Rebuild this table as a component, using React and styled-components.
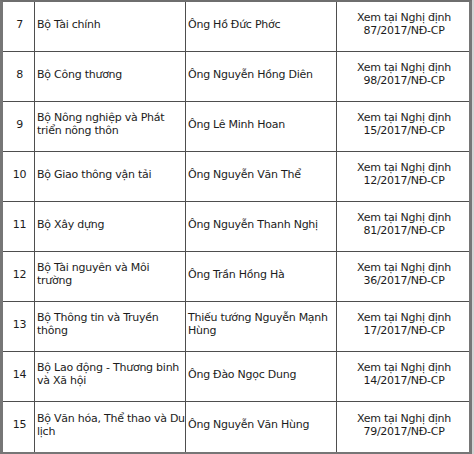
import React from 'react'
import styled, { createGlobalStyle } from 'styled-components'

const GlobalStyle = createGlobalStyle`
  html, body {
    margin: 0;
    padding: 0;
    background: #d4d4d4;
  }
`

const Table = styled.div`
  display: grid;
  grid-template-columns: 32px 151px 151px 132px;
  grid-auto-rows: 50px;
  width: 466px;
  background: #fff;
  border-top: 2px solid #6e6e6e;
  border-left: 3px solid #767676;
  border-right: 3px solid #767676;
  border-bottom: 3px solid #767676;
  font-family: "DejaVu Sans", Verdana, sans-serif;
  font-size: 11px;
  line-height: 13px;
  letter-spacing: -0.25px;
  color: #1c1c1c;
`

const Cell = styled.div`
  box-sizing: border-box;
  display: flex;
  flex-direction: column;
  justify-content: center;
  align-items: ${p => (p.center ? 'center' : 'flex-start')};
  text-align: ${p => (p.center ? 'center' : 'left')};
  padding: 0 0 5px 2px;
  white-space: nowrap;
  overflow: hidden;
  border-right: ${p => (p.lastCol ? 'none' : '1px solid #4e4e4e')};
  border-bottom: ${p => (p.lastRow ? 'none' : '1px solid #4e4e4e')};
`

const Line = styled.span`
  display: block;
`

const rows = [
  ['7', ['Bộ Tài chính'], ['Ông Hồ Đức Phớc'], '87/2017/NĐ-CP'],
  ['8', ['Bộ Công thương'], ['Ông Nguyễn Hồng Diên'], '98/2017/NĐ-CP'],
  ['9', ['Bộ Nông nghiệp và Phát', 'triển nông thôn'], ['Ông Lê Minh Hoan'], '15/2017/NĐ-CP'],
  ['10', ['Bộ Giao thông vận tải'], ['Ông Nguyễn Văn Thể'], '12/2017/NĐ-CP'],
  ['11', ['Bộ Xây dựng'], ['Ông Nguyễn Thanh Nghị'], '81/2017/NĐ-CP'],
  ['12', ['Bộ Tài nguyên và Môi', 'trường'], ['Ông Trần Hồng Hà'], '36/2017/NĐ-CP'],
  ['13', ['Bộ Thông tin và Truyền', 'thông'], ['Thiếu tướng Nguyễn Mạnh', 'Hùng'], '17/2017/NĐ-CP'],
  ['14', ['Bộ Lao động - Thương binh', 'và Xã hội'], ['Ông Đào Ngọc Dung'], '14/2017/NĐ-CP'],
  ['15', ['Bộ Văn hóa, Thể thao và Du', 'lịch'], ['Ông Nguyễn Văn Hùng'], '79/2017/NĐ-CP'],
]

const Lines = ({ items }) => items.map((t, i) => <Line key={i}>{t}</Line>)

const App = () => (
  <>
    <GlobalStyle />
    <Table>
      {rows.map((r, i) => {
        const last = i === rows.length - 1
        return (
          <React.Fragment key={i}>
            <Cell center lastRow={last}>{r[0]}</Cell>
            <Cell lastRow={last}><Lines items={r[1]} /></Cell>
            <Cell lastRow={last}><Lines items={r[2]} /></Cell>
            <Cell center lastCol lastRow={last}>
              <Lines items={['Xem tại Nghị định', r[3]]} />
            </Cell>
          </React.Fragment>
        )
      })}
    </Table>
  </>
)

export default App
